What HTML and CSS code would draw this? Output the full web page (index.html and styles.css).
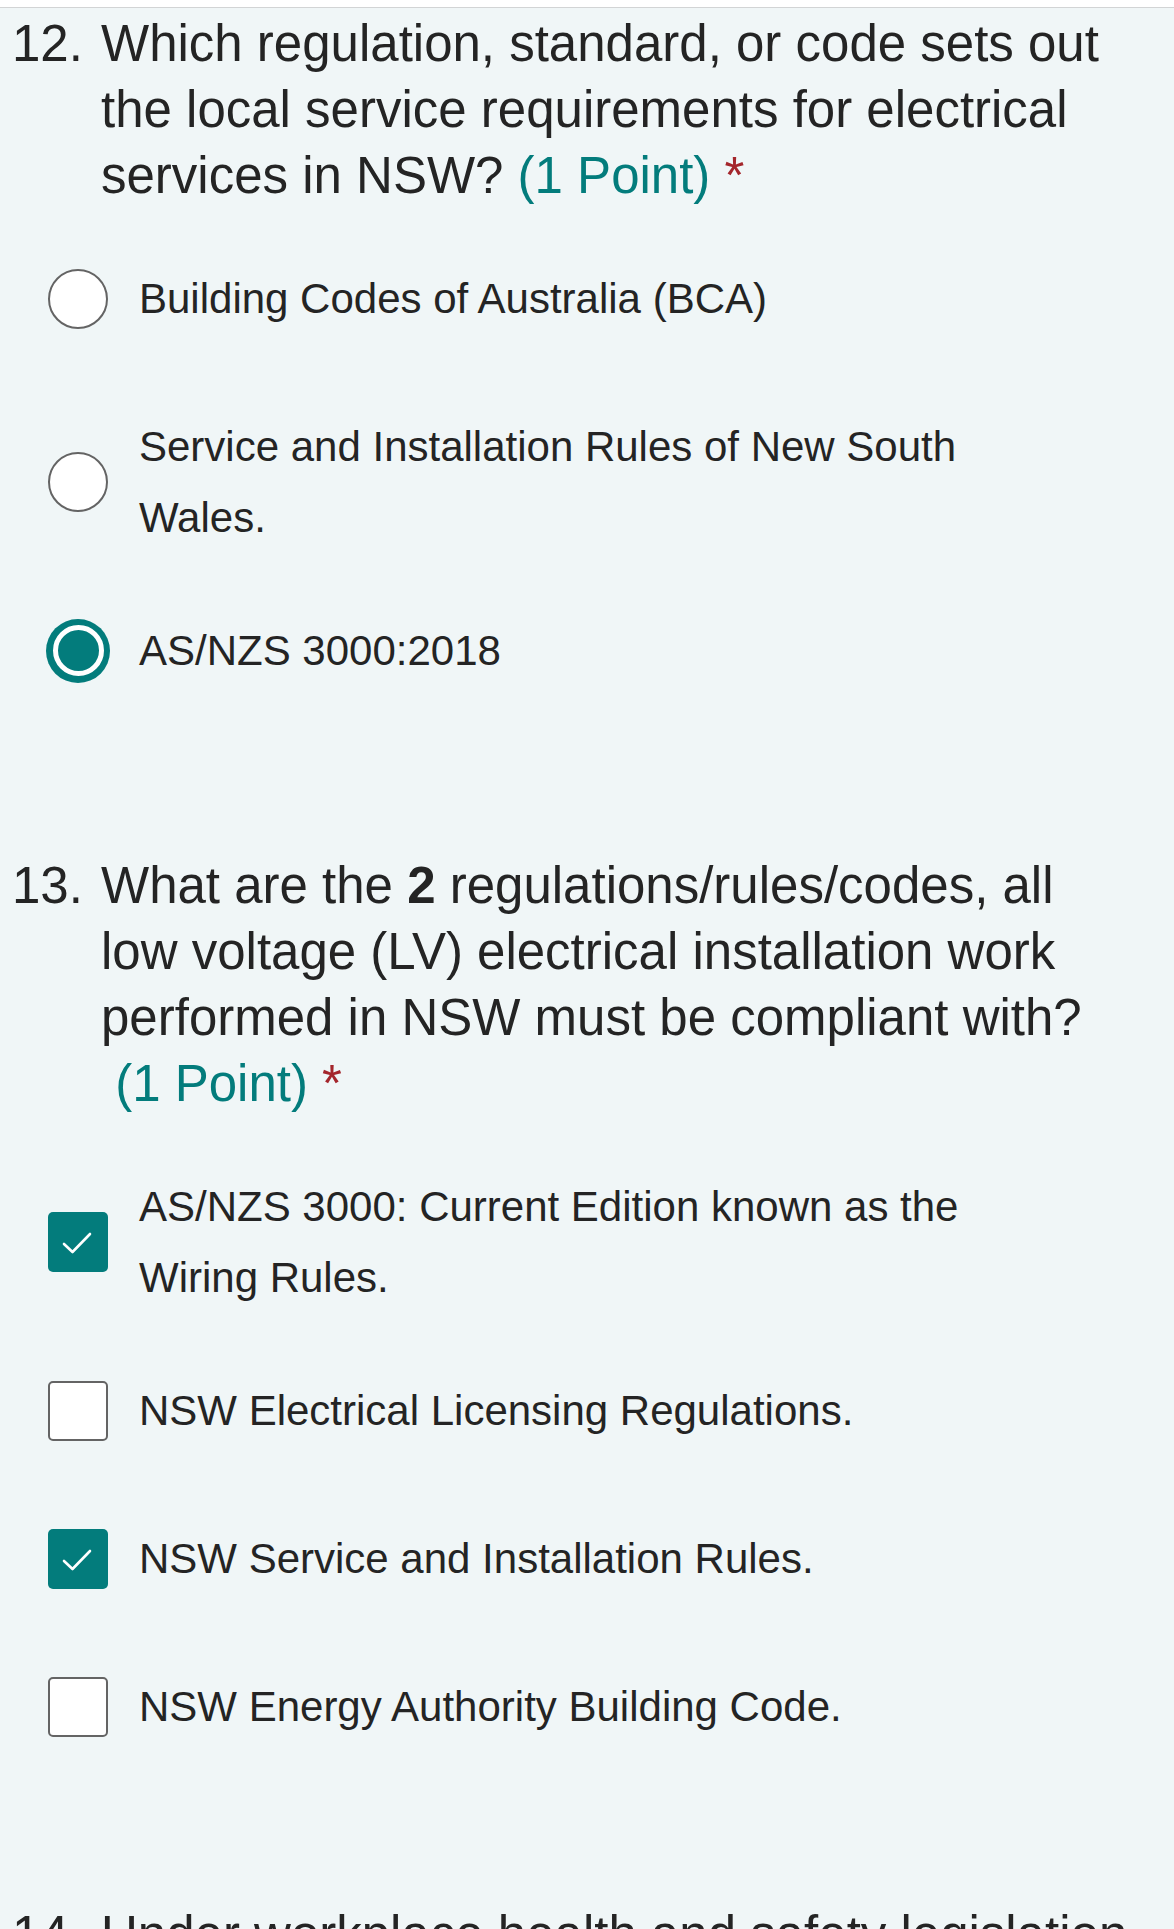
FILE: index.html
```html
<!DOCTYPE html>
<html lang="en">
<head>
<meta charset="utf-8">
<title>Form</title>
<link rel="stylesheet" href="styles.css">
</head>
<body>
<div class="top-strip"></div>
<main class="form">
  <section class="question q12">
    <div class="q-title">
      <span class="q-num">12.</span>
      <span class="q-text">Which regulation, standard, or code sets out the local service requirements for electrical services in NSW? <span class="points">(1 Point)</span> <span class="req">*</span></span>
    </div>
    <div class="choices">
      <div class="choice">
        <div class="choice-row"><span class="radio"></span><span class="label">Building Codes of Australia (BCA)</span></div>
      </div>
      <div class="choice">
        <div class="choice-row"><span class="radio"></span><span class="label">Service and Installation Rules of New South Wales.</span></div>
      </div>
      <div class="choice">
        <div class="choice-row"><span class="radio radio-on"></span><span class="label">AS/NZS 3000:2018</span></div>
      </div>
    </div>
  </section>

  <section class="question q13">
    <div class="q-title">
      <span class="q-num">13.</span>
      <span class="q-text">What are the <b>2</b> regulations/rules/codes, all low voltage (LV) electrical installation work performed in NSW must be compliant with? <span class="points">&nbsp;(1 Point)</span> <span class="req">*</span></span>
    </div>
    <div class="choices">
      <div class="choice">
        <div class="choice-row"><span class="box box-on"><svg viewBox="0 0 60 60" width="60" height="60"><path d="M16 32 L24.5 40 L42 22" fill="none" stroke="#fff" stroke-width="2.6" stroke-linecap="round" stroke-linejoin="round"/></svg></span><span class="label">AS/NZS 3000: Current Edition known as the Wiring Rules.</span></div>
      </div>
      <div class="choice">
        <div class="choice-row"><span class="box"></span><span class="label">NSW Electrical Licensing Regulations.</span></div>
      </div>
      <div class="choice">
        <div class="choice-row"><span class="box box-on"><svg viewBox="0 0 60 60" width="60" height="60"><path d="M16 32 L24.5 40 L42 22" fill="none" stroke="#fff" stroke-width="2.6" stroke-linecap="round" stroke-linejoin="round"/></svg></span><span class="label">NSW Service and Installation Rules.</span></div>
      </div>
      <div class="choice">
        <div class="choice-row"><span class="box"></span><span class="label">NSW Energy Authority Building Code.</span></div>
      </div>
    </div>
  </section>

  <section class="question">
    <div class="q-title">
      <span class="q-num">14.</span>
      <span class="q-text">Under workplace health and safety legislation</span>
    </div>
  </section>
</main>
</body>
</html>
```

FILE: styles.css
```css
html, body {
  margin: 0;
  padding: 0;
  overflow: hidden;
}

body {
  background: #f0f6f7;
  font-family: "Liberation Sans", Arial, Helvetica, sans-serif;
  color: #242424;
}

.top-strip {
  height: 7px;
  background: #ffffff;
  border-bottom: 1px solid #d2d4d5;
}

.form {
  padding-top: 3px;
}

.question {
  padding-bottom: 148px;
}

.q12 {
  padding-bottom: 152px;
}

.q13 {
  padding-bottom: 145px;
}

.q-title {
  display: flex;
  padding: 0 44px 0 12px;
  font-size: 51px;
  line-height: 66px;
}

.q-num {
  flex: 0 0 89px;
}

.q-text {
  flex: 1;
}

.q-text b {
  font-weight: bold;
}

.points {
  color: #037c7c;
}

.req {
  color: #a4262c;
}

.choices {
  display: flex;
  flex-direction: column;
  gap: 62px;
  margin-top: 54px;
  padding: 0 124px 0 48px;
}

.choice {
  min-height: 86px;
}

.choice-row {
  display: flex;
  align-items: center;
  gap: 31px;
}

.label {
  flex: 1;
  font-size: 42px;
  line-height: 71px;
}

.radio {
  position: relative;
  flex: 0 0 60px;
  width: 60px;
  height: 60px;
  box-sizing: border-box;
  border: 2.5px solid #646464;
  border-radius: 50%;
  background: #ffffff;
}

.radio-on {
  border-color: #037c7c;
  background: #037c7c;
  box-shadow: 0 0 0 2px #037c7c;
}

.radio-on::after {
  content: "";
  position: absolute;
  left: 50%;
  top: 50%;
  width: 51px;
  height: 51px;
  box-sizing: border-box;
  margin: -25.5px 0 0 -25.5px;
  border: 5px solid #ffffff;
  border-radius: 50%;
  background: #037c7c;
}

.box {
  flex: 0 0 60px;
  width: 60px;
  height: 60px;
  box-sizing: border-box;
  border: 2.5px solid #646464;
  border-radius: 5px;
  background: #ffffff;
}

.box-on {
  border: none;
  background: #037c7c;
}

.box svg {
  display: block;
}
```
